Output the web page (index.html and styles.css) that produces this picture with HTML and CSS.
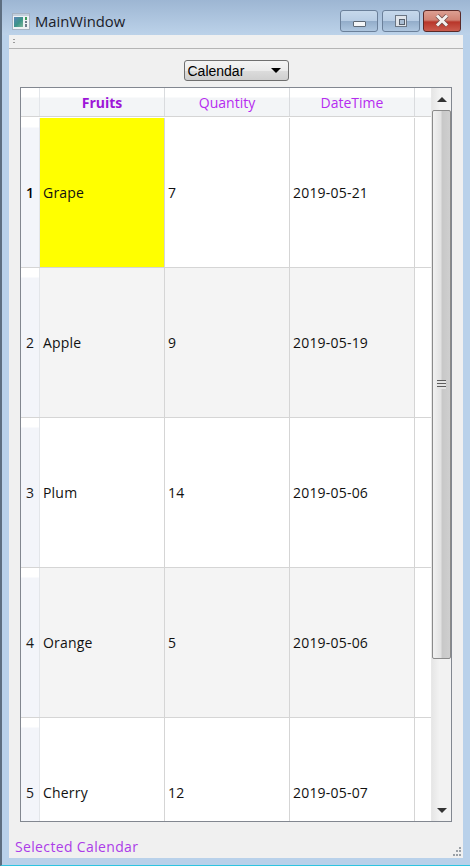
FILE: index.html
```html
<!DOCTYPE html>
<html lang="en">
<head>
    <meta charset="UTF-8">
    <title>MainWindow</title>
    <link rel="stylesheet" href="styles.css">
</head>
<body>
  <div class="window">
    <div class="titlebar">
      <svg class="app-icon" width="18" height="17" viewBox="0 0 18 17">
        <defs>
          <linearGradient id="pic" x1="0" y1="0" x2="1" y2="1">
            <stop offset="0" stop-color="#5a84b8"/>
            <stop offset="0.55" stop-color="#3c9488"/>
            <stop offset="1" stop-color="#7fb79a"/>
          </linearGradient>
        </defs>
        <rect x="0.5" y="0.5" width="17" height="16" fill="#eef1f4" stroke="#a6b3c2"/>
        <rect x="1" y="1" width="16" height="2" fill="#c3cfdc"/>
        <rect x="2" y="4" width="9" height="10" fill="url(#pic)"/>
        <rect x="13" y="4" width="2" height="3" fill="#3f9a58"/>
        <rect x="13" y="8" width="2" height="2" fill="#6d7b8a"/>
        <rect x="13" y="11" width="2" height="3" fill="#6d7b8a"/>
      </svg>
      <span class="title">MainWindow</span>
      <div class="caption-btns">
        <div class="cap-btn"><span class="min-glyph"></span></div>
        <div class="cap-btn"><span class="max-glyph"></span></div>
        <div class="cap-btn close">
          <svg width="16" height="13" viewBox="0 0 16 13">
            <path d="M3 1.5 L13 11.5 M13 1.5 L3 11.5" stroke="#6e4a46" stroke-width="4.4" fill="none"/>
            <path d="M3 1.5 L13 11.5 M13 1.5 L3 11.5" stroke="#f4f0ee" stroke-width="3" fill="none"/>
          </svg>
        </div>
      </div>
    </div>
    <div class="client">
      <div class="toolbar"><span class="gripper"></span></div>
      <div class="combo-row">
        <div class="combo">
          <span>Calendar</span>
          <span class="combo-arrow"></span>
        </div>
      </div>
      <div class="grid-box">
        <div class="grid-main">
          <div class="head-row">
            <div class="corner"></div>
            <div class="head-cell active">Fruits</div>
            <div class="head-cell">Quantity</div>
            <div class="head-cell">DateTime</div>
            <div class="head-filler"></div>
          </div>
          <div class="body-rows">
            <div class="row">
              <div class="row-head current">1</div>
              <div class="cell yellow">Grape</div>
              <div class="cell">7</div>
              <div class="cell">2019-05-21</div>
              <div class="filler"></div>
            </div>
            <div class="row alt">
              <div class="row-head">2</div>
              <div class="cell">Apple</div>
              <div class="cell">9</div>
              <div class="cell">2019-05-19</div>
              <div class="filler"></div>
            </div>
            <div class="row">
              <div class="row-head">3</div>
              <div class="cell">Plum</div>
              <div class="cell">14</div>
              <div class="cell">2019-05-06</div>
              <div class="filler"></div>
            </div>
            <div class="row alt">
              <div class="row-head">4</div>
              <div class="cell">Orange</div>
              <div class="cell">5</div>
              <div class="cell">2019-05-06</div>
              <div class="filler"></div>
            </div>
            <div class="row">
              <div class="row-head">5</div>
              <div class="cell">Cherry</div>
              <div class="cell">12</div>
              <div class="cell">2019-05-07</div>
              <div class="filler"></div>
            </div>
          </div>
        </div>
        <div class="scrollbar">
          <div class="arrow-box"><span class="arrow-up"></span></div>
          <div class="thumb">
            <span class="thumb-lines"></span>
          </div>
          <div class="track"></div>
          <div class="arrow-box"><span class="arrow-down"></span></div>
        </div>
      </div>
      <div class="status">Selected Calendar</div>
      <svg class="resize-grip" width="11" height="12" viewBox="0 0 11 12">
        <path d="M8 1h2v2h-2z M5 4h2v2h-2z M8 4h2v2h-2z M2 8h2v2h-2z M5 8h2v2h-2z M8 8h2v2h-2z" fill="#9aa0a6"/>
      </svg>
    </div>
  </div>
</body>
</html>
```

FILE: styles.css
```css
*{
    margin: 0;
    padding: 0;
    box-sizing: border-box;
}
body{
    width: 470px;
    height: 866px;
    overflow: hidden;
    font-family: "Open Sans", "Noto Sans", sans-serif;
    background: #b9d1ea;
}
.window{
    width: 470px;
    height: 866px;
    display: flex;
    flex-direction: column;
    background: #b9d1ea;
    border-left: 2px solid #5d6e80;
    border-bottom: 1px solid #2ec4e0;
    padding: 0 7px 7px 7px;
}
.titlebar{
    height: 35px;
    flex-shrink: 0;
    margin: 0 -7px;
    padding: 8px 9px 0 10px;
    display: flex;
    align-items: center;
    background: linear-gradient(to bottom, #9db6d3, #bcd2e9);
}
.title{
    margin-left: 5px;
    margin-top: -1px;
    font-size: 14.8px;
    color: #1a2028;
}
.caption-btns{
    margin-left: auto;
    margin-top: -2px;
    display: flex;
    gap: 3.5px;
}
.cap-btn{
    width: 38px;
    height: 22px;
    border: 1px solid #6b809a;
    border-radius: 3px;
    background: linear-gradient(to bottom, #c6d8eb 0%, #b8cde4 48%, #93adca 52%, #aec6df 100%);
    display: flex;
    align-items: center;
    justify-content: center;
}
.cap-btn.close{
    border-color: #5a2a28;
    background: linear-gradient(to bottom, #dc9f92 0%, #d08374 45%, #b8362a 55%, #cb5c4e 100%);
}
.min-glyph{
    width: 13px;
    height: 6px;
    margin-top: 6px;
    background: #f4f6f8;
    border: 1px solid #5e6976;
    border-radius: 1px;
}
.max-glyph{
    width: 12px;
    height: 12px;
    background: #dfe4ea;
    border: 1px solid #6a7583;
    position: relative;
}
.max-glyph::after{
    content: "";
    position: absolute;
    left: 3px;
    top: 3px;
    width: 4px;
    height: 4px;
    border: 1px solid #56606c;
    background: #a9bdd3;
}
.client{
    flex: 1;
    min-height: 0;
    position: relative;
    display: flex;
    flex-direction: column;
    background: #f0f0f0;
}
.toolbar{
    height: 14px;
    border-bottom: 1px solid #b4b4b4;
    background: #f0f0f0;
    display: flex;
    align-items: center;
    padding-left: 4px;
    flex-shrink: 0;
}
.gripper{
    width: 2px;
    height: 5px;
    background: repeating-linear-gradient(to bottom, #9a9a9a 0, #9a9a9a 1px, transparent 1px, transparent 3px);
}
.combo-row{
    display: flex;
    justify-content: center;
    padding-top: 11px;
    flex-shrink: 0;
}
.combo{
    width: 105px;
    height: 21px;
    border: 1px solid #6f6f6f;
    border-radius: 3px;
    background: linear-gradient(to bottom, #f4f4f4 0%, #ebebeb 50%, #dcdcdc 52%, #cfcfcf 100%);
    display: flex;
    align-items: center;
    justify-content: space-between;
    padding: 0 7px 0 3px;
    font-family: "Liberation Sans", sans-serif;
    font-size: 14px;
    color: #000;
}
.combo-arrow{
    width: 0;
    height: 0;
    border-left: 5px solid transparent;
    border-right: 5px solid transparent;
    border-top: 5px solid #000;
}
.grid-box{
    flex: 1;
    min-height: 0;
    margin: 6px 11px 0 11px;
    border: 1px solid #828790;
    display: flex;
    background: #fff;
}
.grid-main{
    flex: 1;
    min-width: 0;
    display: flex;
    flex-direction: column;
    overflow: hidden;
}
.head-row{
    height: 29px;
    flex-shrink: 0;
    display: flex;
    border-bottom: 1px solid #d5d5d5;
    background: linear-gradient(to bottom, #ffffff 0, #ffffff 9px, #f3f5f7 10px, #f3f5f7 100%);
}
.corner{
    width: 19px;
    border-right: 1px solid #e3e6ea;
}
.head-cell{
    width: 125px;
    border-right: 1px solid #d9dbde;
    display: flex;
    align-items: center;
    justify-content: center;
    font-size: 14px;
    color: #b62cf0;
}
.head-cell.active{
    font-weight: bold;
    color: #9d14d8;
}
.head-filler{
    flex: 1;
}
.body-rows{
    flex: 1;
    min-height: 0;
    overflow: hidden;
    padding-top: 1px;
}
.row{
    height: 150px;
    display: flex;
    background: #fff;
    border-bottom: 1px solid #d5d5d5;
}
.row.alt{
    background: #f4f4f4;
}
.row-head{
    width: 19px;
    flex-shrink: 0;
    display: flex;
    align-items: center;
    justify-content: center;
    border-right: 1px solid #e3e6ea;
    background: linear-gradient(to bottom, #ffffff 0, #ffffff 9px, #f3f5fa 10px, #f3f5fa 100%);
    font-size: 14px;
    color: #1a1a1a;
}
.row-head.current{
    font-weight: 600;
    color: #000;
}
.cell{
    width: 125px;
    flex-shrink: 0;
    border-right: 1px solid #d5d5d5;
    display: flex;
    align-items: center;
    padding-left: 3px;
    font-size: 14px;
    letter-spacing: 0.2px;
    color: #111;
}
.cell.yellow{
    background: #ffff00;
}
.filler{
    flex: 1;
    background: #fff;
}
.scrollbar{
    width: 20px;
    flex-shrink: 0;
    display: flex;
    flex-direction: column;
    background: linear-gradient(to right, #e6e6e6, #f2f2f2 40%, #f2f2f2);
    border-left: 1px solid #e8e8e8;
}
.arrow-box{
    height: 22px;
    flex-shrink: 0;
    display: flex;
    align-items: center;
    justify-content: center;
}
.arrow-up{
    width: 0;
    height: 0;
    border-left: 5px solid transparent;
    border-right: 5px solid transparent;
    border-bottom: 5px solid #333;
}
.arrow-down{
    width: 0;
    height: 0;
    border-left: 5px solid transparent;
    border-right: 5px solid transparent;
    border-top: 5px solid #333;
}
.thumb{
    height: 549px;
    flex-shrink: 0;
    border: 1px solid #8a8a8a;
    border-radius: 2px;
    background: linear-gradient(to right, #f1f1f1, #e2e2e2 45%, #c8c8c8 55%, #cfcfcf);
    display: flex;
    align-items: center;
    justify-content: center;
}
.thumb-lines{
    width: 9px;
    height: 9px;
    background: repeating-linear-gradient(to bottom, #5d5d5d 0, #5d5d5d 1px, #e4e4e4 1px, #e4e4e4 3px);
}
.track{
    flex: 1;
}
.status{
    height: 36px;
    flex-shrink: 0;
    display: flex;
    align-items: center;
    padding-left: 6px;
    padding-top: 12px;
    font-size: 14px;
    letter-spacing: 0.35px;
    color: #ac3ce8;
}
.resize-grip{
    position: absolute;
    right: 1px;
    bottom: 0;
}
```
